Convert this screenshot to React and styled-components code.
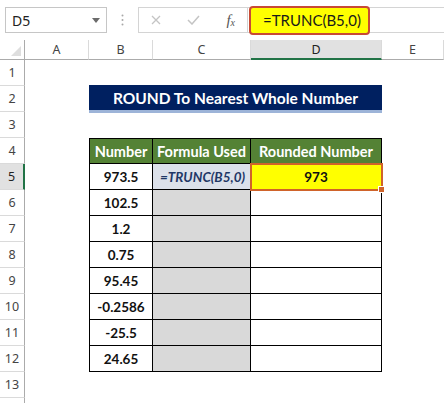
import React from "react";
import styled, { createGlobalStyle, css } from "styled-components";

const GlobalStyle = createGlobalStyle`
  html, body {
    margin: 0;
    padding: 0;
    background: #ffffff;
  }
  body {
    font-family: "Noto Sans", "Open Sans", sans-serif;
    overflow: hidden;
  }
`;

const columns = ["A", "B", "C", "D", "E"];
const numbers = ["973.5", "102.5", "1.2", "0.75", "95.45", "-0.2586", "-25.5", "24.65"];

const EmptyRow = ({ label }) => (
  <>
    <RowHead>{label}</RowHead>
    <Blank />
    <Blank />
    <Blank />
    <Blank />
    <Blank />
  </>
);

const App = () => {
  return (
    <Page>
      <GlobalStyle />
      <Toolbar>
        <NameBox>
          <span>D5</span>
          <svg width="8" height="5" viewBox="0 0 8 5">
            <path d="M0 0 L8 0 L4 5 Z" fill="#6b6b6b" />
          </svg>
        </NameBox>
        <Grip>
          <svg width="3" height="12" viewBox="0 0 3 12">
            <circle cx="1.5" cy="1.5" r="1" fill="#a8a8a8" />
            <circle cx="1.5" cy="6" r="1" fill="#a8a8a8" />
            <circle cx="1.5" cy="10.5" r="1" fill="#a8a8a8" />
          </svg>
        </Grip>
        <FxButtons>
          <svg width="10" height="10" viewBox="0 0 10 10">
            <path d="M1 1 L9 9 M9 1 L1 9" stroke="#c4c4c4" strokeWidth="1.3" />
          </svg>
          <svg width="13" height="10" viewBox="0 0 13 10">
            <path d="M1 5 L5 9 L12 1" stroke="#c4c4c4" strokeWidth="1.5" fill="none" />
          </svg>
          <Fx>
            f<sub>x</sub>
          </Fx>
        </FxButtons>
        <FormulaInput>
          <FormulaHighlight>=TRUNC(B5,0)</FormulaHighlight>
        </FormulaInput>
      </Toolbar>

      <Sheet>
        <Corner>
          <svg width="10" height="10" viewBox="0 0 10 10">
            <path d="M10 0 L10 10 L0 10 Z" fill="#dedede" />
          </svg>
        </Corner>
        {columns.map((c) => (
          <ColHead key={c} $active={c === "D"}>
            {c}
          </ColHead>
        ))}

        <EmptyRow label="1" />

        <RowHead>2</RowHead>
        <Blank />
        <Title>ROUND To Nearest Whole Number</Title>
        <Blank />

        <EmptyRow label="3" />

        <RowHead>4</RowHead>
        <Blank />
        <HeadCell $first>Number</HeadCell>
        <HeadCell>Formula Used</HeadCell>
        <HeadCell>Rounded Number</HeadCell>
        <Blank />

        {numbers.map((n, i) => (
          <React.Fragment key={n}>
            <RowHead $active={i === 0}>{i + 5}</RowHead>
            <Blank />
            <DataCell $first>{n}</DataCell>
            {i === 0 ? (
              <DataCell $variant="formula">=TRUNC(B5,0)</DataCell>
            ) : (
              <DataCell $variant="gray" />
            )}
            {i === 0 ? (
              <DataCell $variant="selected">
                973
                <FillHandle />
              </DataCell>
            ) : (
              <DataCell />
            )}
            <Blank />
          </React.Fragment>
        ))}

        <EmptyRow label="13" />
        <EmptyRow label="" />
      </Sheet>
    </Page>
  );
};

const Page = styled.div`
  width: 444px;
  height: 403px;
  overflow: hidden;
  background: #ffffff;
`;

const Toolbar = styled.div`
  display: flex;
  align-items: center;
  height: 40px;
  padding-left: 5px;
  box-sizing: border-box;
`;

const NameBox = styled.div`
  display: flex;
  align-items: center;
  justify-content: space-between;
  width: 102px;
  height: 26px;
  box-sizing: border-box;
  border: 1px solid #c6c6c6;
  padding: 0 6px 0 6px;
  font-size: 14px;
  color: #222;
`;

const Grip = styled.div`
  display: flex;
  align-items: center;
  justify-content: center;
  width: 31px;
`;

const FxButtons = styled.div`
  display: flex;
  align-items: center;
  justify-content: space-between;
  width: 110px;
  height: 26px;
  box-sizing: border-box;
  border: 1px solid #d4d4d4;
  padding: 0 12px 0 12px;
`;

const Fx = styled.span`
  font-family: "Liberation Serif", serif;
  font-style: italic;
  font-size: 15px;
  color: #555;
  sub {
    font-size: 10px;
    vertical-align: -1px;
  }
`;

const FormulaInput = styled.div`
  flex: 1;
  height: 26px;
  box-sizing: border-box;
  border-top: 1px solid #d4d4d4;
  border-bottom: 1px solid #d4d4d4;
  display: flex;
  align-items: center;
`;

const FormulaHighlight = styled.div`
  display: flex;
  align-items: center;
  width: 121px;
  height: 29px;
  box-sizing: border-box;
  margin-left: 1px;
  padding-left: 12px;
  background: #ffff00;
  border: 2px solid #c84a35;
  border-radius: 4px;
  font-family: "Lato", "Liberation Sans", sans-serif;
  font-size: 15px;
  color: #1a1a1a;
`;

const Sheet = styled.div`
  display: grid;
  grid-template-columns: 25px 64px 64px 98px 131px 62px;
  grid-template-rows: 20px repeat(14, 26px);
`;

const Corner = styled.div`
  display: flex;
  align-items: flex-end;
  justify-content: flex-end;
  padding: 0 3px 3px 0;
  box-sizing: border-box;
  border-right: 1px solid #ababab;
  border-bottom: 1px solid #ababab;
`;

const ColHead = styled.div`
  display: flex;
  align-items: center;
  justify-content: center;
  box-sizing: border-box;
  border-right: 1px solid #dadada;
  border-bottom: 1px solid #ababab;
  font-size: 12.5px;
  color: #444;
  ${(p) =>
    p.$active &&
    css`
      background: #e1e1e1;
      border-bottom: 2px solid #217346;
      color: #222;
    `}
`;

const RowHead = styled.div`
  display: flex;
  align-items: center;
  justify-content: center;
  box-sizing: border-box;
  border-right: 1px solid #ababab;
  border-bottom: 1px solid #dadada;
  font-size: 12.5px;
  color: #444;
  ${(p) =>
    p.$active &&
    css`
      background: #e1e1e1;
      border-right: 2px solid #217346;
      color: #222;
    `}
`;

const Blank = styled.div``;

const Title = styled.div`
  grid-column: span 3;
  display: flex;
  align-items: center;
  justify-content: center;
  margin-top: -1px;
  height: 25px;
  background: #002060;
  border-bottom: 3px solid #9db4d8;
  font-family: "Lato", "Liberation Sans", sans-serif;
  font-weight: 700;
  font-size: 15.5px;
  color: #ffffff;
`;

const tableCell = css`
  display: flex;
  align-items: center;
  justify-content: center;
  box-sizing: border-box;
  border-right: 1px solid #000;
  border-bottom: 1px solid #000;
  font-family: "Lato", "Liberation Sans", sans-serif;
  font-weight: 700;
  ${(p) => p.$first && "border-left: 1px solid #000;"}
`;

const HeadCell = styled.div`
  ${tableCell}
  border-top: 1px solid #000;
  background: #548235;
  color: #ffffff;
  font-size: 14.5px;
`;

const variants = {
  formula: css`
    background: #dce1ea;
    color: #1f3766;
    font-style: italic;
    justify-content: flex-start;
    padding-left: 7px;
  `,
  gray: css`
    background: #d9d9d9;
  `,
  selected: css`
    position: relative;
    background: #ffff00;
    outline: 2px solid #d0632a;
    outline-offset: -1px;
  `,
};

const DataCell = styled.div`
  ${tableCell}
  background: #ffffff;
  color: #111;
  font-size: 13.5px;
  ${(p) => p.$variant && variants[p.$variant]}
`;

const FillHandle = styled.span`
  position: absolute;
  right: -4px;
  bottom: -4px;
  width: 5px;
  height: 5px;
  background: #d0632a;
  border: 1px solid #ffffff;
`;

export default App;
